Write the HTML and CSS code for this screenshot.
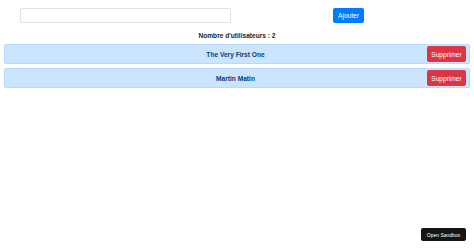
FILE: index.html
```html
<!DOCTYPE html>
<html lang="fr">
<head>
<meta charset="utf-8">
<title>Utilisateurs</title>
<link rel="stylesheet" href="styles.css">
</head>
<body>
<div class="app">
  <form class="add-row">
    <input class="name-input" type="text">
    <button class="btn btn-primary" type="button">Ajouter</button>
  </form>
  <h3 class="count">Nombre d'utilisateurs : 2</h3>
  <ul class="users">
    <li class="user">
      <span class="user-name">The Very First One</span>
      <button class="btn btn-danger" type="button">Supprimer</button>
    </li>
    <li class="user">
      <span class="user-name">Martin Matin</span>
      <button class="btn btn-danger" type="button">Supprimer</button>
    </li>
  </ul>
</div>
<a class="sandbox">Open Sandbox</a>
</body>
</html>
```
FILE: styles.css
```css
* { box-sizing: border-box; }
html, body { margin: 0; padding: 0; background: #fff; }
body {
  font-family: "Liberation Sans", Arial, sans-serif;
  font-size: 6.6px;
  color: #212529;
  width: 474px;
  height: 248px;
  overflow: hidden;
}
.app { padding: 8px 4px 0 4px; }
.add-row {
  display: flex;
  align-items: center;
  height: 15px;
  margin: 0;
  padding-left: 16px;
}
.name-input {
  width: 211px;
  height: 15px;
  border: 1px solid #dfe2e6;
  border-radius: 2px;
  margin: 0;
  padding: 0 4px;
  background: #fff;
}
.btn {
  font-family: "Liberation Sans", Arial, sans-serif;
  font-size: 6.6px;
  color: #fff;
  border: none;
  border-radius: 2px;
  margin: 0;
  padding: 0;
  display: flex;
  align-items: center;
  justify-content: center;
}
.btn-primary {
  background: #007bff;
  width: 31px;
  height: 15px;
  margin-left: 102px;
}
.btn-danger {
  background: #dc3545;
  width: 39px;
  height: 16px;
}
.count {
  margin: 0;
  height: 21px;
  padding-top: 3px;
  display: flex;
  align-items: center;
  justify-content: center;
  font-size: 6.6px;
  font-weight: bold;
  color: #212529;
}
.users {
  list-style: none;
  margin: 0;
  padding: 0;
  display: flex;
  flex-direction: column;
  gap: 4px;
}
.user {
  height: 20px;
  background: #cce5ff;
  border: 1px solid #b8daff;
  border-radius: 2px;
  display: flex;
  align-items: center;
  justify-content: space-between;
  padding: 0 3px 0 0;
}
.user-name {
  flex: 1;
  text-align: center;
  font-weight: bold;
  color: #004085;
  margin-right: -39px;
}
.btn-danger { position: relative; }
.sandbox {
  position: fixed;
  right: 8px;
  bottom: 7px;
  width: 45px;
  height: 13px;
  background: #151515;
  color: #fff;
  border-radius: 2px;
  font-size: 5px;
  display: flex;
  align-items: center;
  justify-content: center;
}
```
